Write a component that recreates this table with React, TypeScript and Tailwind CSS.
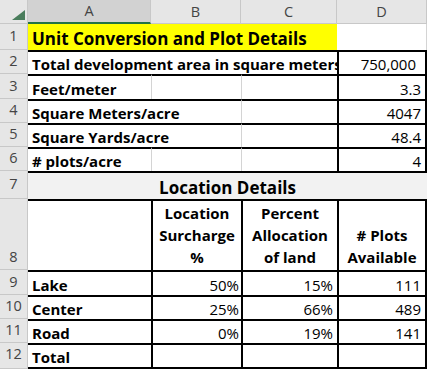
import React from "react";

const cell = "shrink-0 flex items-end overflow-hidden whitespace-nowrap leading-[18px] pb-px";
const label = "pl-1 font-bold";
const num = "justify-end";

function Row({
  n,
  h,
  numPb = "pb-[3px]",
  children,
}: {
  n: number;
  h: string;
  numPb?: string;
  children?: React.ReactNode;
}) {
  return (
    <div className={`flex ${h}`}>
      <div
        className={`w-[28px] shrink-0 flex items-end justify-center ${numPb} bg-[#e6e6e6] border-r border-b border-[#c8c8c8] text-[14.5px] leading-[18px] text-[#444]`}
      >
        {n}
      </div>
      {children}
    </div>
  );
}

export default function App() {
  const settings = [
    { n: 3, name: "Feet/meter", value: "3.3", split: true },
    { n: 4, name: "Square Meters/acre", value: "4047", split: false },
    { n: 5, name: "Square Yards/acre", value: "48.4", split: false },
    { n: 6, name: "# plots/acre", value: "4", split: true },
  ];

  const locations = [
    { n: 9, name: "Lake", surcharge: "50%", share: "15%", plots: "111", h: "h-[25px]" },
    { n: 10, name: "Center", surcharge: "25%", share: "66%", plots: "489", h: "h-[24px]" },
    { n: 11, name: "Road", surcharge: "0%", share: "19%", plots: "141", h: "h-[24px]" },
  ];

  return (
    <div className="w-[428px] h-[369px] overflow-hidden bg-white text-black text-[15px] font-['Open_Sans',Lato,sans-serif]">
      {/* column headers */}
      <div className="flex h-[24px] text-[14.5px] text-[#444]">
        <div className="w-[28px] shrink-0 relative bg-[#e6e6e6] border-r border-b border-[#c8c8c8]">
          <svg className="absolute left-0 top-0" width="28" height="24" viewBox="0 0 28 24">
            <polygon points="25,10 25,20 12,20" fill="#4a7d5c" />
          </svg>
        </div>
        <div className="w-[123px] shrink-0 flex items-center justify-center bg-[#d2d2d2] border-r border-[#c8c8c8] border-b-2 border-b-[#217346]">
          A
        </div>
        <div className="w-[90px] shrink-0 flex items-center justify-center bg-[#e6e6e6] border-r border-b border-[#c8c8c8]">
          B
        </div>
        <div className="w-[96px] shrink-0 flex items-center justify-center bg-[#e6e6e6] border-r border-b border-[#c8c8c8]">
          C
        </div>
        <div className="w-[90px] shrink-0 flex items-center justify-center bg-[#e6e6e6] border-r border-b border-[#c8c8c8]">
          D
        </div>
      </div>

      {/* unit conversion */}
      <Row n={1} h="h-[26px]" numPb="pb-[4px]">
        <div className={`${cell} w-[309px] bg-[#ffff00] pl-1 font-bold text-[17px] leading-[20px] pb-[3px]`}>
          Unit Conversion and Plot Details
        </div>
        <div className={`${cell} w-[90px] border-r border-[#d4d4d4]`} />
      </Row>

      <Row n={2} h="h-[24px]">
        <div className={`${cell} ${label} w-[309px] border-t-2 border-black`}>
          Total development area in square meters
        </div>
        <div className={`${cell} ${num} w-[90px] pr-[9px] border-t-2 border-x-2 border-black`}>750,000</div>
      </Row>

      {settings.map((s) => (
        <Row key={s.n} n={s.n} h={s.n === 3 ? "h-[25px]" : "h-[24px]"}>
          {s.split ? (
            <>
              <div className={`${cell} ${label} w-[123px] border-t-2 border-black`}>{s.name}</div>
              <div className={`${cell} w-[90px] border-t-2 border-t-black border-l border-l-[#d4d4d4]`} />
            </>
          ) : (
            <div className={`${cell} ${label} w-[213px] border-t-2 border-black`}>{s.name}</div>
          )}
          <div className={`${cell} w-[96px] border-t-2 border-t-black border-l border-l-[#d4d4d4]`} />
          <div className={`${cell} ${num} w-[90px] pr-1 border-t-2 border-x-2 border-black`}>{s.value}</div>
        </Row>
      ))}

      {/* location details */}
      <Row n={7} h="h-[28px]" numPb="pb-[5px]">
        <div className={`${cell} justify-center w-[399px] bg-[#f2f2f2] border-t-2 border-black font-bold text-[17px] leading-[20px] pb-[3px]`}>
          Location Details
        </div>
      </Row>

      <Row n={8} h="h-[71px]">
        <div className="shrink-0 w-[123px] border-t-2 border-black" />
        <div className="shrink-0 w-[90px] flex flex-col justify-end items-center pb-[2px] leading-[22px] font-bold border-t-2 border-l-2 border-black">
          <span>Location</span>
          <span>Surcharge</span>
          <span>%</span>
        </div>
        <div className="shrink-0 w-[96px] flex flex-col justify-end items-center pb-[2px] leading-[22px] font-bold border-t-2 border-l-2 border-black">
          <span>Percent</span>
          <span>Allocation</span>
          <span>of land</span>
        </div>
        <div className="shrink-0 w-[90px] flex flex-col justify-end items-center pb-[2px] leading-[22px] font-bold border-t-2 border-x-2 border-black">
          <span># Plots</span>
          <span>Available</span>
        </div>
      </Row>

      {locations.map((l) => (
        <Row key={l.n} n={l.n} h={l.h}>
          <div className={`${cell} ${label} w-[123px] border-t-2 border-black`}>{l.name}</div>
          <div className={`${cell} ${num} w-[90px] pr-[2px] border-t-2 border-l-2 border-black`}>{l.surcharge}</div>
          <div className={`${cell} ${num} w-[96px] pr-1 border-t-2 border-l-2 border-black`}>{l.share}</div>
          <div className={`${cell} ${num} w-[90px] pr-1 border-t-2 border-x-2 border-black`}>{l.plots}</div>
        </Row>
      ))}

      <Row n={12} h="h-[26px]" numPb="pb-[5px]">
        <div className={`${cell} ${label} w-[123px] border-y-2 border-black`}>Total</div>
        <div className={`${cell} w-[90px] border-y-2 border-l-2 border-black`} />
        <div className={`${cell} w-[96px] border-y-2 border-l-2 border-black`} />
        <div className={`${cell} w-[90px] border-y-2 border-x-2 border-black`} />
      </Row>
    </div>
  );
}
